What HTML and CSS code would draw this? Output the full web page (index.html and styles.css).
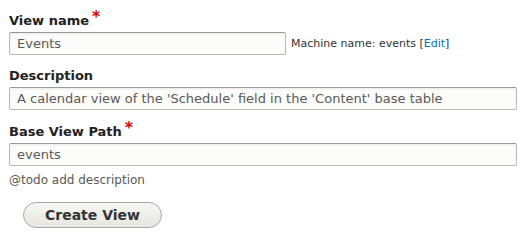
FILE: index.html
```html
<!DOCTYPE html>
<html>
<head>
<meta charset="utf-8">
<link rel="stylesheet" href="styles.css">
</head>
<body>
<form class="page">
  <div class="field">
    <label class="label" for="name">View name<span class="req">*</span></label>
    <div class="row">
      <input class="text short" id="name" type="text" value="Events">
      <span class="machine">Machine name: events [<a class="link" href="#">Edit</a>]</span>
    </div>
  </div>
  <div class="field">
    <label class="label" for="desc">Description</label>
    <input class="text" id="desc" type="text" value="A calendar view of the 'Schedule' field in the 'Content' base table">
  </div>
  <div class="field last">
    <label class="label" for="path">Base View Path<span class="req">*</span></label>
    <input class="text" id="path" type="text" value="events">
    <div class="hint">@todo add description</div>
  </div>
  <div class="actions">
    <button class="button" type="button">Create View</button>
  </div>
</form>
</body>
</html>
```

FILE: styles.css
```css
html, body {
  margin: 0;
  padding: 0;
  background: #ffffff;
}
.page {
  padding: 12px 10px 0 9px;
  font-family: "DejaVu Sans", sans-serif;
  font-size: 13px;
  color: #333333;
}
.field {
  margin-bottom: 13px;
}
.field.last {
  margin-bottom: 0;
}
.label {
  display: block;
  font-weight: bold;
  line-height: 16px;
  margin-bottom: 3px;
  color: #222222;
}
.req {
  color: #e00000;
  font-size: 16px;
  line-height: 10px;
  margin-left: 3px;
  vertical-align: 3px;
}
.row {
  display: flex;
  align-items: center;
  gap: 5px;
}
.text {
  box-sizing: border-box;
  display: block;
  width: 100%;
  height: 23px;
  margin: 0;
  padding: 0 7px;
  border: 1px solid #b8b8b8;
  border-top-color: #999999;
  border-radius: 2px;
  background: #fcfcfa;
  box-shadow: inset 0 1px 2px rgba(0, 0, 0, 0.08);
  font-family: "DejaVu Sans", sans-serif;
  font-size: 13px;
  color: #595959;
}
.text.short {
  width: 277px;
  flex: none;
}
.machine {
  font-size: 11px;
  color: #333333;
  white-space: nowrap;
}
.link {
  color: #0074bd;
  text-decoration: none;
}
.hint {
  margin-top: 6px;
  font-size: 12px;
  line-height: 16px;
  color: #595959;
}
.actions {
  padding: 14px 0 0 14px;
}
.button {
  box-sizing: border-box;
  width: 139px;
  height: 26px;
  margin: 0;
  padding: 0;
  border: 1px solid #a6a6a6;
  border-radius: 20px;
  background: linear-gradient(to bottom, #f6f6f3, #e7e7df);
  font-family: "DejaVu Sans", sans-serif;
  font-size: 14px;
  font-weight: bold;
  color: #333333;
}
```
